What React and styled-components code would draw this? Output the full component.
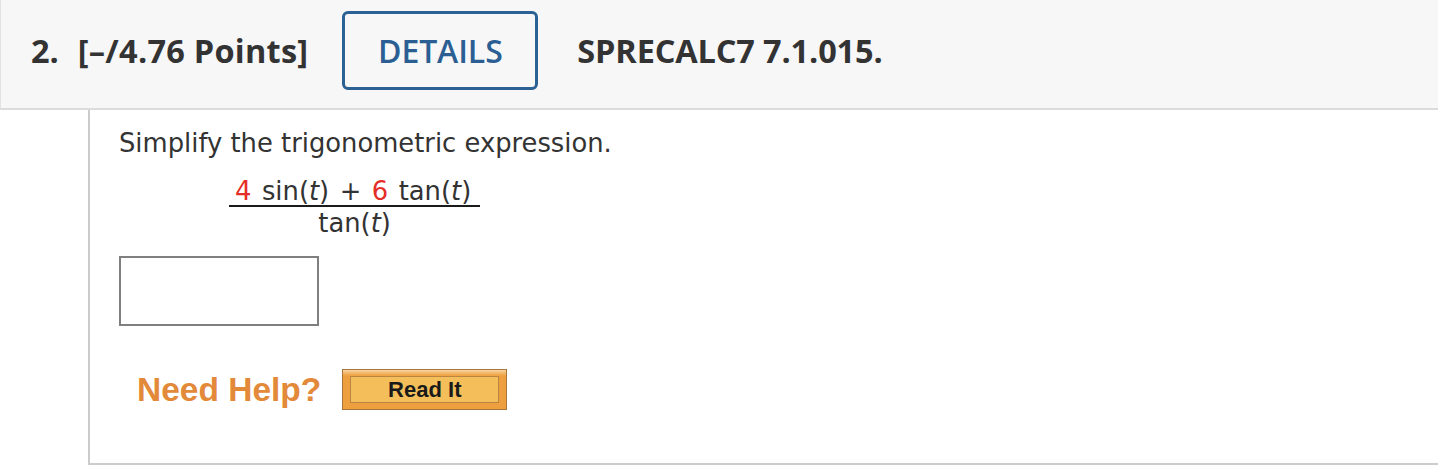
import React from "react";
import styled, { createGlobalStyle } from "styled-components";

const Global = createGlobalStyle`
  html, body { margin: 0; padding: 0; background: #ffffff; }
  body { font-family: "DejaVu Sans", Verdana, sans-serif; }
`;

const Header = styled.div`
  display: flex;
  align-items: center;
  box-sizing: border-box;
  height: 110px;
  padding: 11px 0 18px 30px;
  background: #f7f7f7;
  border-left: 1px solid #e2e2e2;
  border-bottom: 2px solid #dcdcdc;
  font-family: "Open Sans", sans-serif;
  font-weight: 700;
  font-size: 32.5px;
  color: #333333;
`;

const QNumber = styled.span`
  margin-right: 19px;
`;

const Points = styled.span`
  letter-spacing: 0.25px;
`;

const DetailsButton = styled.div`
  box-sizing: border-box;
  display: flex;
  align-items: center;
  justify-content: center;
  width: 196px;
  height: 79px;
  margin-left: 34px;
  border: 3px solid #2c6196;
  border-radius: 6px;
  color: #2b5f94;
  font-size: 32px;
  font-weight: 600;
  letter-spacing: -0.1px;
`;

const Code = styled.span`
  margin-left: 39px;
  letter-spacing: -0.15px;
`;

const Body = styled.div`
  margin-left: 88px;
  border-left: 2px solid #cccccc;
  border-bottom: 2px solid #cccccc;
  padding: 15px 0 53px 29px;
  color: #333333;
  font-size: 25.8px;
`;

const Prompt = styled.div`
  line-height: 36px;
`;

const Fraction = styled.div`
  display: inline-flex;
  flex-direction: column;
  align-items: center;
  margin: 16px 0 0 110px;
`;

const Numerator = styled.div`
  line-height: 28px;
  padding: 0 9px 0 6px;
  border-bottom: 2px solid #1a1a1a;
  white-space: pre;
  word-spacing: 2.3px;
`;

const Denominator = styled.div`
  line-height: 28px;
  padding-top: 2px;
`;

const Red = styled.span`
  color: #e52d27;
`;

const Var = styled.i``;

const AnswerBox = styled.div`
  box-sizing: border-box;
  width: 200px;
  height: 70px;
  margin-top: 19px;
  border: 2px solid #7f7f7f;
  background: #fff;
`;

const HelpRow = styled.div`
  display: flex;
  align-items: center;
  margin-top: 43px;
  padding-left: 18px;
  font-family: "Liberation Sans", Arial, sans-serif;
  font-weight: 700;
`;

const NeedHelp = styled.span`
  font-size: 33.5px;
  color: #e3893a;
`;

const ReadItOuter = styled.div`
  box-sizing: border-box;
  width: 165px;
  height: 41px;
  margin-left: 21px;
  padding: 6px 7px;
  border: 1px solid #a87638;
  background: linear-gradient(#f7d6a6 0px, #f2b868 3px, #eea040 6px, #ee9f3e 100%);
`;

const ReadItInner = styled.div`
  box-sizing: border-box;
  height: 100%;
  display: flex;
  align-items: center;
  justify-content: center;
  border: 1px solid #b98540;
  background: #f4bf5a;
  font-size: 22px;
  color: #1a1a1a;
`;

export default function App() {
  return (
    <>
      <Global />
      <Header>
        <QNumber>2.</QNumber>
        <Points>[–/4.76 Points]</Points>
        <DetailsButton>DETAILS</DetailsButton>
        <Code>SPRECALC7 7.1.015.</Code>
      </Header>
      <Body>
        <Prompt>Simplify the trigonometric expression.</Prompt>
        <Fraction>
          <Numerator>
            <Red>4</Red> sin(<Var>t</Var>) + <Red>6</Red> tan(<Var>t</Var>)
          </Numerator>
          <Denominator>
            tan(<Var>t</Var>)
          </Denominator>
        </Fraction>
        <AnswerBox />
        <HelpRow>
          <NeedHelp>Need Help?</NeedHelp>
          <ReadItOuter>
            <ReadItInner>Read It</ReadItInner>
          </ReadItOuter>
        </HelpRow>
      </Body>
    </>
  );
}
